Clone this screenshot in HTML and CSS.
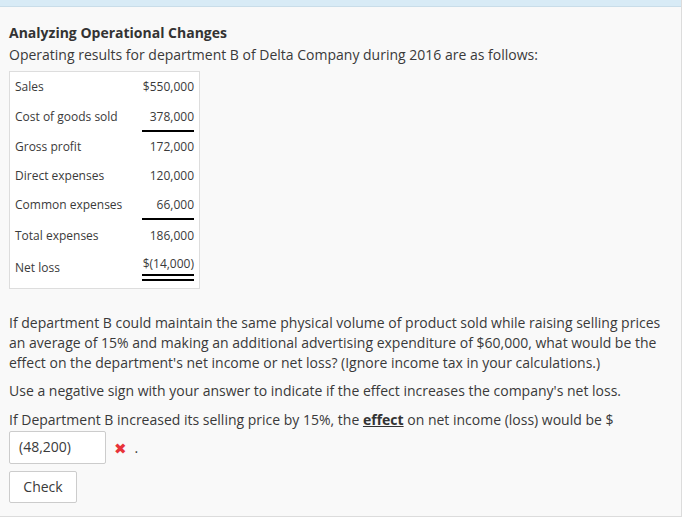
FILE: index.html
```html
<!DOCTYPE html>
<html>
<head>
<meta charset="utf-8">
<link rel="stylesheet" href="styles.css">
</head>
<body>
<div class="panel">
  <div class="topbar"></div>
  <div class="content">
    <h1 class="title">Analyzing Operational Changes</h1>
    <p class="intro">Operating results for department B of Delta Company during 2016 are as follows:</p>
    <table class="fin">
      <tr class="r1"><td class="lbl">Sales</td><td class="num">$550,000</td></tr>
      <tr class="r2"><td class="lbl">Cost of goods sold</td><td class="num"><span class="single">378,000</span></td></tr>
      <tr class="r3"><td class="lbl">Gross profit</td><td class="num">172,000</td></tr>
      <tr class="r4"><td class="lbl">Direct expenses</td><td class="num">120,000</td></tr>
      <tr class="r5"><td class="lbl">Common expenses</td><td class="num"><span class="single">66,000</span></td></tr>
      <tr class="r6"><td class="lbl">Total expenses</td><td class="num">186,000</td></tr>
      <tr class="r7"><td class="lbl">Net loss</td><td class="num"><span class="double">$(14,000)</span></td></tr>
    </table>
    <p class="q">If department B could maintain the same physical volume of product sold while raising selling prices an average of 15% and making an additional advertising expenditure of $60,000, what would be the effect on the department's net income or net loss? (Ignore income tax in your calculations.)</p>
    <p class="q2">Use a negative sign with your answer to indicate if the effect increases the company's net loss.</p>
    <p class="q3">If Department B increased its selling price by 15%, the <b class="u">effect</b> on net income (loss) would be $</p>
    <div class="answer">
      <div class="input">(48,200)</div>
      <span class="x">&#x2716;</span>
      <span class="dot">.</span>
    </div>
    <button class="check">Check</button>
  </div>
</div>
</body>
</html>
```

FILE: styles.css
```css
html, body {
  margin: 0;
  padding: 0;
  background: #ffffff;
}
body {
  font-family: "Open Sans", "DejaVu Sans", sans-serif;
  color: #3a3a3a;
}
.panel {
  width: 681px;
  height: 516px;
  background: #f9f9f9;
  border-right: 1px solid #dcdcdc;
  border-bottom: 1px solid #dcdcdc;
}
.topbar {
  height: 6px;
  background: #d8ebf6;
  border-bottom: 1px solid #c9dde9;
}
.content {
  padding: 16px 0 0 9px;
}
.title {
  margin: 0;
  font-size: 14px;
  line-height: 20px;
  font-weight: bold;
  color: #333333;
}
.intro {
  margin: 2px 0 0 0;
  font-size: 14px;
  line-height: 20px;
}
.fin {
  margin-top: 6px;
  width: 191px;
  border: 1px solid #dddddd;
  background: #ffffff;
  border-collapse: collapse;
  font-size: 12px;
  line-height: 15px;
  color: #3a3a3a;
}
.fin td {
  padding: 0;
  vertical-align: middle;
}
.r1 td { height: 29px; }
.r2 td { height: 30px; }
.r3 td { height: 30px; }
.r4 td { height: 28px; }
.r5 td { height: 30px; }
.r6 td { height: 32px; }
.r7 td { height: 37px; vertical-align: top; box-sizing: border-box; }
.fin td.lbl {
  padding-left: 5px;
}
.fin td.num {
  text-align: right;
  padding-right: 5px;
}
.single {
  display: inline-block;
  border-bottom: 2px solid #000000;
  padding-bottom: 6px;
  margin-bottom: -8px;
  min-width: 52px;
}
.r7 td.lbl {
  padding-top: 9px;
}
.r7 td.num {
  padding-top: 5px;
}
.double {
  display: inline-block;
  border-bottom: 7px double #000000;
  padding-bottom: 3px;
  min-width: 52px;
}
.q {
  margin: 24px 0 0 0;
  font-size: 14px;
  line-height: 20px;
  width: 660px;
}
.q2 {
  margin: 8px 0 0 0;
  font-size: 14px;
  line-height: 20px;
}
.q3 {
  margin: 9px 0 0 0;
  font-size: 14px;
  line-height: 20px;
}
.u {
  text-decoration: underline;
  color: #333333;
}
.answer {
  display: flex;
  align-items: center;
  margin-top: 1px;
}
.input {
  width: 97px;
  height: 33px;
  box-sizing: border-box;
  border: 1px solid #cccccc;
  border-radius: 2px;
  background: #ffffff;
  font-size: 14px;
  line-height: 30px;
  padding-left: 9px;
}
.x {
  color: #e8333a;
  font-size: 15px;
  margin-left: 8px;
  margin-top: 3px;
  font-family: "DejaVu Sans", sans-serif;
}
.dot {
  margin-left: 8px;
  font-size: 14px;
}
.check {
  display: block;
  margin-top: 7px;
  width: 68px;
  height: 32px;
  background: #ffffff;
  border: 1px solid #cccccc;
  border-radius: 2px;
  font-family: "Open Sans", sans-serif;
  font-size: 14px;
  color: #3a3a3a;
  padding: 0;
}
```
